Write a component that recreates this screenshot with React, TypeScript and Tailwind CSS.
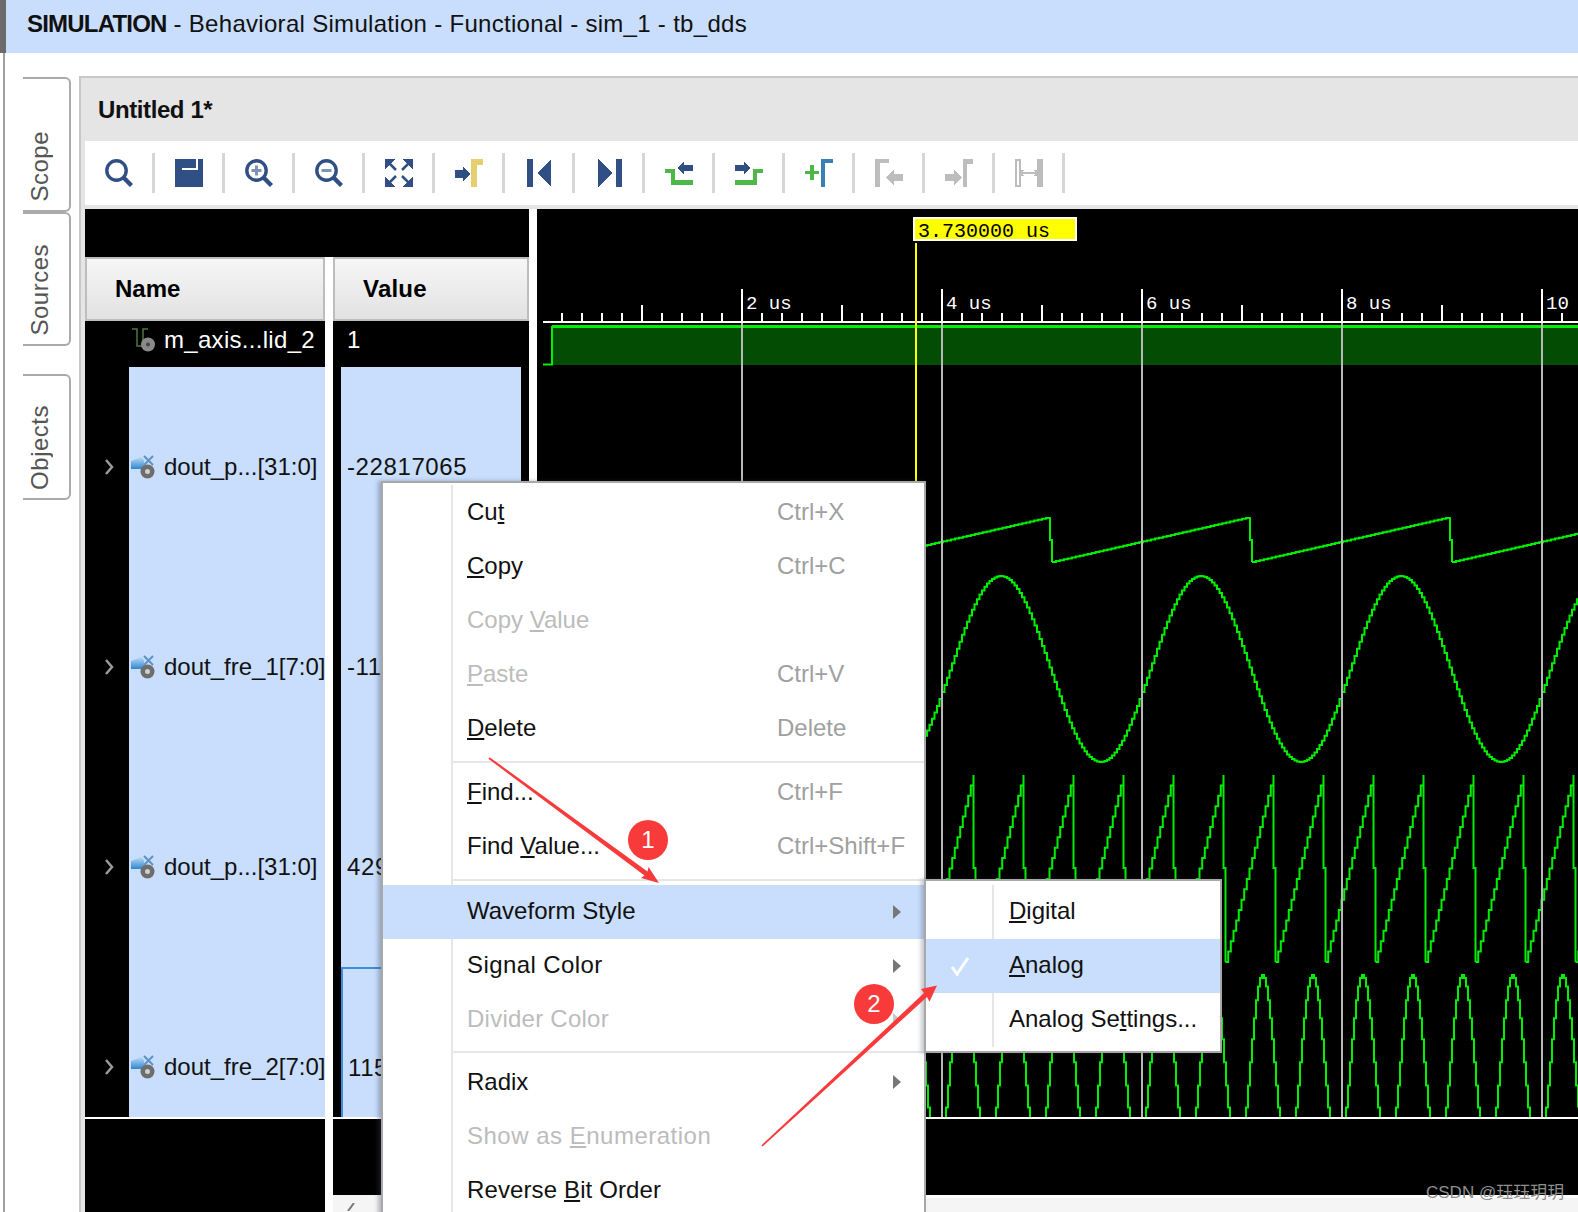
import type { ReactNode } from "react";

const BLUE = "#304f85";
const GRAY = "#bdbdbd";
const GREEN = "#4db848";

const Lens = ({ sign }: { sign?: "plus" | "minus" }) => (
  <svg width="28" height="28" viewBox="0 0 28 28">
    <circle cx="11.5" cy="11.5" r="9.7" fill="none" stroke={BLUE} strokeWidth="3.4" />
    <path d="M19 19l7.5 7.5" stroke={BLUE} strokeWidth="4.4" />
    {sign && <path d="M6.5 11.5h10" stroke="#7f93b5" strokeWidth="3" />}
    {sign === "plus" && <path d="M11.5 6.5v10" stroke="#7f93b5" strokeWidth="3" />}
  </svg>
);

const Glyph = ({ children }: { children: ReactNode }) => (
  <svg width="28" height="28" viewBox="0 0 28 28" shapeRendering="crispEdges">
    {children}
  </svg>
);

const toolbar: ReactNode[] = [
  <Lens />,
  <Glyph>
    <rect width="28" height="28" fill={BLUE} />
    <path d="M6.5 10h15.5V0" fill="none" stroke="#fff" strokeWidth="2.5" />
  </Glyph>,
  <Lens sign="plus" />,
  <Lens sign="minus" />,
  <svg width="28" height="28" viewBox="0 0 28 28" fill={BLUE} stroke={BLUE}>
    <path d="M0 0h10L0 10zM28 0v10L18 0zM0 28V18l10 10zM28 28H18l10-10z" strokeWidth="1" />
    <path d="M3 3l8 8M25 3l-8 8M3 25l8-8M25 25l-8-8" strokeWidth="2.5" />
  </svg>,
  <Glyph>
    <path d="M0 11h8V8l7 7-7 7v-3H0z" fill={BLUE} />
    <path d="M16 28V0h12v6H22v22z" fill="#e5cf6f" />
  </Glyph>,
  <Glyph>
    <rect x="2" width="6" height="28" fill={BLUE} />
    <path d="M26 0v28L12 14z" fill={BLUE} />
  </Glyph>,
  <Glyph>
    <path d="M3 0v28l14-14z" fill={BLUE} />
    <rect x="21" width="6" height="28" fill={BLUE} />
  </Glyph>,
  <Glyph>
    <path d="M0 10h10v11h18v5H6V14H0z" fill={GREEN} />
    <path d="M28 6H19V2l-6 7 6 7v-4h9z" fill={BLUE} />
  </Glyph>,
  <Glyph>
    <path d="M28 10H18v11H0v5h22V14h6z" fill={GREEN} />
    <path d="M0 6h9V2l6 7-6 7v-4H0z" fill={BLUE} />
  </Glyph>,
  <Glyph>
    <path d="M5 6h4v6h5v3H9v6H5v-6H0v-3h5z" fill={GREEN} />
    <path d="M16 28V0h12v4h-8v24z" fill="#3a7fb5" />
  </Glyph>,
  <Glyph>
    <path d="M0 28V0h14v4H5v24z" fill={GRAY} />
    <path d="M28 15h-9v-4l-8 7.5 8 7.5v-4h9z" fill={GRAY} />
  </Glyph>,
  <Glyph>
    <path d="M0 15h9v-4l8 7.5-8 7.5v-4H0z" fill={GRAY} />
    <path d="M18 28V0h10v5h-6v23z" fill={GRAY} />
  </Glyph>,
  <Glyph>
    <rect x="1" y="1" width="4" height="26" fill="none" stroke={GRAY} strokeWidth="2" />
    <rect x="22" width="6" height="28" fill={GRAY} />
    <path d="M6 14h16M8 11l-2 3 2 3M20 11l2 3-2 3" fill="none" stroke={GRAY} strokeWidth="2" />
  </Glyph>,
];

const saw = (firstPeak: number, period: number, top: number, bottom: number, mid: number, dx: number) => {
  let d = "";
  for (let p = firstPeak; p < 1800; p += period) {
    const start = p - period + 2;
    let cmd = `M${start} ${bottom}`;
    const n = Math.round((p - start) / dx);
    for (let i = 1; i <= n; i++) {
      const x = start + ((p - start) * i) / n;
      const y = bottom - ((bottom - top) * i) / n;
      cmd += `H${x.toFixed(1)}V${y.toFixed(1)}`;
    }
    d += `${cmd}V${mid}H${p + 2}V${bottom}`;
  }
  return d;
};

const sine = (peak: number, period: number, center: number, amp: number, dx: number) => {
  let d = "";
  for (let x = 552; x < 1580; x += dx) {
    const y = center - amp * Math.cos((2 * Math.PI * (x - peak)) / period);
    d += d ? `H${x}V${y.toFixed(1)}` : `M${x} ${y.toFixed(1)}`;
  }
  return d;
};

const majors = [741, 941, 1141, 1341, 1541];

const ticks = () => {
  const out: ReactNode[] = [];
  for (let x = 561; x < 1580; x += 20) {
    if ((x - 541) % 200 === 0) continue;
    const mid = (x - 541) % 100 === 0;
    out.push(<rect key={x} x={x} y={mid ? 305 : 313} width="2" height={mid ? 16 : 8} fill="#fff" />);
  }
  return out;
};

const Waveform = () => (
  <svg width="1041" height="986" viewBox="537 209 1041 986" className="block">
    <rect x="537" y="209" width="1041" height="986" fill="#000" />
    <clipPath id="rows">
      <rect x="537" y="321" width="1041" height="796" />
    </clipPath>

    {ticks()}
    <rect x="543" y="321" width="1035" height="2" fill="#fff" />
    {majors.map((x) => (
      <g key={x}>
        <rect x={x} y="289" width="2" height="33" fill="#fff" />
        <text x={x + 5} y="309" fill="#fff" fontFamily="'Liberation Mono', monospace" fontSize="19">
          {x === 1541 ? "10" : `${(x - 541) / 100} us`}
        </text>
      </g>
    ))}

    <rect x="552" y="326" width="1026" height="39" fill="#034c03" />
    <path d="M543 364.5h9V326" fill="none" stroke="#00f000" strokeWidth="2" />
    <path d="M552 326.5H1578" fill="none" stroke="#00f000" strokeWidth="3" />

    <g clipPath="url(#rows)" fill="none" stroke="#00ee00" strokeWidth="2">
      <path d={saw(1050, 200, 517, 562, 540, 4)} />
      <path d={sine(1000, 200, 669, 93, 2.5)} />
      <path d={saw(973.5, 50, 775, 962, 868, 2.6)} />
      <path d={sine(1262, 50, 1068, 93, 2)} />
    </g>

    {majors.map((x) => (
      <rect key={x} x={x} y="323" width="2" height="794" fill="#b8b8b8" />
    ))}
    <rect x="915" y="243" width="2" height="874" fill="#ffff00" />
    <rect x="914" y="218" width="162" height="22" fill="#ffff00" stroke="#fff" strokeWidth="2" />
    <text x="918" y="237" fill="#000" fontFamily="'Liberation Mono', monospace" fontSize="20">
      3.730000 us
    </text>
    <rect x="537" y="1117" width="1041" height="2" fill="#fff" />
  </svg>
);

const ScalarIcon = () => (
  <svg width="24" height="24" viewBox="0 0 24 24" className="shrink-0">
    <path d="M1 1h5v17h6V1h5" fill="none" stroke="#4c7a3a" strokeWidth="1.5" />
    <circle cx="17" cy="16.5" r="7" fill="#8a8a8a" />
    <circle cx="17" cy="16.5" r="2" fill="#444" />
  </svg>
);

const BusIcon = () => (
  <svg width="24" height="24" viewBox="0 0 24 24" className="shrink-0">
    <defs>
      <linearGradient id="bus" x1="0" y1="0" x2="0" y2="1">
        <stop offset="0" stopColor="#bcdcf5" />
        <stop offset="1" stopColor="#2f86d0" />
      </linearGradient>
    </defs>
    <path d="M0 6l10-4 3 3v9H0z" fill="url(#bus)" />
    <path d="M13 1l9 9M22 1l-9 9" stroke="#5b93c4" strokeWidth="2" />
    <circle cx="16.5" cy="16.5" r="7" fill="#6d6d6d" />
    <circle cx="16.5" cy="16.5" r="2.5" fill="#cfcfcf" />
  </svg>
);

const signals = [
  { name: "dout_p...[31:0]", value: "-22817065" },
  { name: "dout_fre_1[7:0]", value: "-114" },
  { name: "dout_p...[31:0]", value: "42949" },
  { name: "dout_fre_2[7:0]", value: "115" },
];

const NameColumn = () => (
  <div className="w-[240px] flex flex-col bg-black">
    <div className="h-[48px] shrink-0" />
    <div className="h-[64px] shrink-0 flex items-center pl-[28px] font-bold text-black bg-gradient-to-b from-[#f6f6f6] to-[#e2e2e2] border-2 border-[#bdbdbd]">
      Name
    </div>
    <div className="h-[796px] shrink-0 overflow-hidden">
      <div className="h-[46px] flex items-center pl-[46px] pb-[8px] text-white">
        <ScalarIcon />
        <span className="ml-[9px] tracking-[0.3px]">m_axis...lid_2</span>
      </div>
      {signals.map((s, i) => (
        <div key={i} className="h-[200px] flex">
          <div className="w-[44px] flex items-center pl-[20px]">
            <svg width="9" height="16" viewBox="0 0 9 16">
              <path d="M1 1l6 7-6 7" fill="none" stroke="#9a9a9a" strokeWidth="2.5" />
            </svg>
          </div>
          <div className="flex-1 flex items-center pl-[2px] bg-[#c9ddfc] text-[#111] whitespace-nowrap overflow-hidden">
            <BusIcon />
            <span className="ml-[9px]">{s.name}</span>
          </div>
        </div>
      ))}
    </div>
    <div className="h-[2px] shrink-0 bg-white" />
  </div>
);

const ValueColumn = () => (
  <div className="w-[196px] flex flex-col bg-black">
    <div className="h-[48px] shrink-0" />
    <div className="h-[64px] shrink-0 flex items-center pl-[28px] font-bold text-black tracking-[0.2px] bg-gradient-to-b from-[#f6f6f6] to-[#e2e2e2] border-2 border-[#bdbdbd]">
      Value
    </div>
    <div className="h-[796px] shrink-0 overflow-hidden">
      <div className="h-[46px] flex items-center pl-[14px] pb-[8px] text-white">1</div>
      {signals.map((s, i) => (
        <div key={i} className="h-[200px] pl-[8px] pr-[8px]">
          <div
            className={
              "h-full flex items-center bg-[#c9ddfc] text-[#111] tracking-[0.6px] " +
              (i === 3 ? "border-l-2 border-t-2 border-[#3b8fd8] pl-[5px]" : "pl-[6px]")
            }
          >
            {s.value}
          </div>
        </div>
      ))}
    </div>
    <div className="h-[2px] shrink-0 bg-white" />
    <div className="h-[76px] shrink-0" />
    <div className="flex-1 bg-[#f5f5f5] pl-[14px] pt-[8px]">
      <svg width="8" height="8" viewBox="0 0 8 8">
        <path d="M7 0L1 8" stroke="#777" strokeWidth="2" />
      </svg>
    </div>
  </div>
);

type Item = {
  pre?: string;
  u?: string;
  post?: string;
  shortcut?: string;
  disabled?: boolean;
  arrow?: boolean;
  active?: boolean;
  extra?: string;
};

const MenuRow = ({
  item,
  gutter,
  label,
  check,
}: {
  item: Item;
  gutter: string;
  label: string;
  check?: boolean;
}) => (
  <div className={"h-[54px] flex items-center " + (item.active ? "bg-[#c9ddfc]" : "")}>
    <div
      className={
        "h-full flex items-center justify-center shrink-0 " +
        gutter +
        (item.active ? "" : " border-r-2 border-[#e6e6e6]")
      }
    >
      {check && (
        <svg width="22" height="20" viewBox="0 0 22 20">
          <path d="M3 11l5 7L19 2" fill="none" stroke="#fff" strokeWidth="3" />
        </svg>
      )}
    </div>
    <div
      className={
        "whitespace-nowrap " +
        label +
        (item.disabled ? " text-[#bcbcbc] " : " text-[#111] ") +
        (item.extra ?? "")
      }
    >
      {item.pre}
      {item.u && <u>{item.u}</u>}
      {item.post}
    </div>
    {item.shortcut && (
      <div className="absolute left-[394px] text-[#a0a0a0] whitespace-nowrap">{item.shortcut}</div>
    )}
    {item.arrow && (
      <svg className="absolute left-[510px]" width="8" height="14" viewBox="0 0 8 14">
        <path d="M0 0l8 7-8 7z" fill={item.disabled ? "#c8c8c8" : "#777"} />
      </svg>
    )}
  </div>
);

const MenuSep = ({ height, pad }: { height: string; pad: string }) => (
  <div className={"flex " + height}>
    <div className="w-[70px] shrink-0 border-r-2 border-[#e6e6e6]" />
    <div className={"flex-1 " + pad}>
      <div className="h-[2px] bg-[#e6e6e6]" />
    </div>
  </div>
);

const menuLabel = "ml-[14px]";

const ContextMenu = () => (
  <div className="absolute left-[381px] top-[481px] w-[545px] pt-[2px] bg-white border-2 border-[#a8a8a8] shadow-[-3px_0_4px_rgba(60,70,90,0.35)]">
    {[
      { pre: "Cu", u: "t", shortcut: "Ctrl+X" },
      { u: "C", post: "opy", shortcut: "Ctrl+C" },
      { pre: "Copy ", u: "V", post: "alue", disabled: true },
      { u: "P", post: "aste", shortcut: "Ctrl+V", disabled: true },
      { u: "D", post: "elete", shortcut: "Delete" },
    ].map((it, i) => (
      <MenuRow key={i} item={it} gutter="w-[70px]" label={menuLabel} />
    ))}
    <MenuSep height="h-[10px]" pad="pt-[6px]" />
    {[
      { u: "F", post: "ind...", shortcut: "Ctrl+F" },
      { pre: "Find ", u: "V", post: "alue...", shortcut: "Ctrl+Shift+F" },
    ].map((it, i) => (
      <MenuRow key={i} item={it} gutter="w-[70px]" label={menuLabel} />
    ))}
    <MenuSep height="h-[12px]" pad="pt-[6px]" />
    {[
      { pre: "Waveform Style", arrow: true, active: true, extra: "pb-[2px]" },
      { pre: "Signal Color", arrow: true, extra: "pb-[2px] tracking-[0.4px]" },
      { pre: "Divider Color", arrow: true, disabled: true, extra: "pb-[2px] tracking-[0.25px]" },
    ].map((it, i) => (
      <MenuRow key={i} item={it} gutter="w-[70px]" label={menuLabel} />
    ))}
    <MenuSep height="h-[8px]" pad="pt-[4px]" />
    {[
      { pre: "Radix", arrow: true },
      { pre: "Show as ", u: "E", post: "numeration", disabled: true, extra: "tracking-[0.5px]" },
      { pre: "Reverse ", u: "B", post: "it Order", extra: "tracking-[0.12px]" },
    ].map((it, i) => (
      <MenuRow key={i} item={it} gutter="w-[70px]" label={menuLabel} />
    ))}
  </div>
);

const subLabel = "ml-[15px] pb-[3px]";

const SubMenu = () => (
  <div className="absolute left-[924px] top-[879px] w-[298px] py-[4px] bg-white border-2 border-[#a8a8a8] shadow-[-3px_0_4px_rgba(60,70,90,0.3)]">
    <MenuRow item={{ u: "D", post: "igital" }} gutter="w-[68px]" label={subLabel} />
    <MenuRow item={{ u: "A", post: "nalog", active: true }} gutter="w-[68px]" label={subLabel} check />
    <MenuRow item={{ pre: "Analog Se", u: "t", post: "tings..." }} gutter="w-[68px]" label={subLabel} />
  </div>
);

const Annotations = () => (
  <>
    <svg className="absolute left-0 top-0 pointer-events-none" width="1578" height="1212" viewBox="0 0 1578 1212">
      <path d="M489.6 757.2L647.5 871.5L648.6 867L659 883L641 878L644.5 875.5L488.4 758.8Z" fill="#f93a3a" />
      <path d="M761.4 1145.4L924 993L921 989L937 985.5L929.5 1001.7L927 997L762.6 1146.6Z" fill="#f93a3a" />
    </svg>
    <div className="absolute left-[628px] top-[820px] w-[40px] h-[40px] rounded-full bg-[#f93a3a] text-white flex items-center justify-center">
      1
    </div>
    <div className="absolute left-[854px] top-[984px] w-[40px] h-[40px] rounded-full bg-[#f93a3a] text-white flex items-center justify-center">
      2
    </div>
  </>
);

const SideTab = ({ label, className }: { label: string; className: string }) => (
  <div
    className={
      "w-[48px] flex flex-col items-start pl-[5px] justify-end pb-[8px] border-t-2 border-r-2 border-b-2 border-[#aaaaaa] rounded-r-[6px] " +
      className
    }
  >
    <span className="[writing-mode:vertical-rl] rotate-180 text-[#555] leading-none tracking-[0.5px]">{label}</span>
  </div>
);

const App = () => {
  return (
    <div className="relative w-[1578px] h-[1212px] overflow-hidden bg-white text-[24px] leading-none font-['Liberation_Sans','Noto_Sans_CJK_SC',sans-serif]">
      <div className="h-[53px] flex items-center bg-[#c9ddfc] text-[#111] whitespace-nowrap pb-[5px]">
        <div className="w-[6px] h-[53px] -mb-[5px] bg-[#6b6b6b] mr-[21px]" />
        <span className="tracking-[0.3px]">
          <b className="tracking-[-0.8px]">SIMULATION</b> - Behavioral Simulation - Functional - sim_1 - tb_dds
        </span>
      </div>

      <div className="flex h-[1159px]">
        <div className="w-[3px] shrink-0" />
        <div className="w-[2px] shrink-0 bg-[#a0a0a0]" />

        <div className="w-[74px] shrink-0 pl-[18px] pt-[24px] flex flex-col">
          <SideTab label="Scope" className="h-[135px]" />
          <SideTab label="Sources" className="h-[134px]" />
          <SideTab label="Objects" className="h-[126px] mt-[28px]" />
        </div>

        <div className="flex-1 min-w-0 mt-[23px] border-l-2 border-t-2 border-[#c8c8c8] bg-[#e5e5e5] pl-[4px] flex flex-col">
          <div className="h-[63px] shrink-0 flex items-center pl-[13px] font-bold text-[#111] tracking-[-0.4px]">
            Untitled 1*
          </div>
          <div className="h-[64px] shrink-0 bg-white flex items-center">
            {toolbar.map((icon, i) => (
              <div key={i} className="w-[70px] h-full flex items-center justify-center pr-[2px] relative">
                {icon}
                <div className="absolute right-0 top-[12px] h-[40px] w-[3px] bg-[#d6d6d6]" />
              </div>
            ))}
          </div>
          <div className="h-[4px] shrink-0" />
          <div className="flex-1 flex bg-white">
            <NameColumn />
            <div className="w-[8px] shrink-0">
              <div className="h-[48px] bg-black" />
            </div>
            <ValueColumn />
            <div className="w-[8px] shrink-0" />
            <div className="flex-1 flex flex-col bg-[#f5f5f5]">
              <Waveform />
              <div className="h-[3px] bg-white" />
            </div>
          </div>
        </div>
      </div>

      <ContextMenu />
      <SubMenu />
      <Annotations />
      <div className="absolute left-[1426px] top-[1184px] text-[17px] text-[#8f8f8f] whitespace-nowrap">
        CSDN @珏珏玥玥
      </div>
    </div>
  );
};

export default App;
